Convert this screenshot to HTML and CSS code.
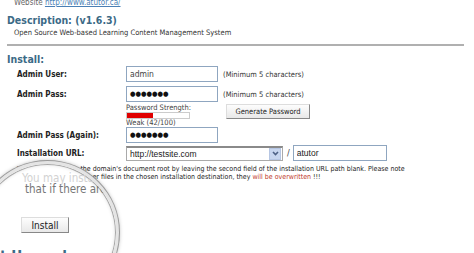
FILE: index.html
```html
<!DOCTYPE html>
<html lang="en">
<head>
    <meta charset="UTF-8">
    <meta name="viewport" content="width=device-width, initial-scale=1.0">
    <title>ATutor Installation</title>
    <link rel="stylesheet" href="styles.css">
</head>
<body>
    <div class="page">
        <div class="site">Website <a href="#">http://www.atutor.ca/</a></div>
        <h2>Description: (v1.6.3)</h2>
        <p class="desc">Open Source Web-based Learning Content Management System</p>
        <hr>
        <h2>Install:</h2>

        <div class="form">
            <div class="row">
                <label>Admin User:</label>
                <div class="field">
                    <input class="box" type="text" value="admin">
                    <span class="hint">(Minimum 5 characters)</span>
                </div>
            </div>
            <div class="row">
                <label>Admin Pass:</label>
                <div class="field">
                    <div class="box pass">●●●●●●●</div>
                    <span class="hint">(Minimum 5 characters)</span>
                </div>
            </div>
            <div class="row strength-row">
                <span></span>
                <div class="field top">
                    <div class="strength">
                        <div>Password Strength:</div>
                        <div class="meter"><div class="fill" style="width: 42%;"></div></div>
                        <div>Weak (42/100)</div>
                    </div>
                    <button class="btn gen">Generate Password</button>
                </div>
            </div>
            <div class="row">
                <label>Admin Pass (Again):</label>
                <div class="field">
                    <div class="box pass">●●●●●●●</div>
                </div>
            </div>
            <div class="row url-row">
                <label>Installation URL:</label>
                <div class="field">
                    <div class="select">
                        <span>http://testsite.com</span>
                        <span class="arrow">
                            <svg width="9" height="9" viewBox="0 0 9 9"><path d="M2 3 L4.5 5.5 L7 3" fill="none" stroke="#4d6185" stroke-width="1.6"/></svg>
                        </span>
                    </div>
                    <span class="slash">/</span>
                    <input class="box path" type="text" value="atutor">
                </div>
            </div>
        </div>

        <p class="note">You may install into the domain's document root by leaving the second field of the installation URL path blank. Please note<br>that if there are any other files in the chosen installation destination, they <span class="warn">will be overwritten</span> !!!</p>
    </div>

    <!-- magnifier over the bottom-left corner -->
    <div class="lens">
        <div class="zoom-line faded">You may install into the</div>
        <div class="zoom-line second">that if there are any</div>
        <button class="btn big">Install</button>
        <div class="zoom-head">t Upgrade:</div>
    </div>
</body>
</html>
```

FILE: styles.css
```css
* { box-sizing: border-box; }
html, body { margin: 0; height: 100%; overflow: hidden; background: #fff; }
body { font-family: "DejaVu Sans Condensed", "DejaVu Sans", Verdana, sans-serif; font-stretch: condensed; color: #222; position: relative; }
.page { padding: 0 10px 0 7px; }
.site { font-size: 8px; line-height: 10px; margin-top: -2px; padding-left: 7px; color: #666; }
.site a { color: #4a7fb5; }
h2 { font-size: 10.5px; line-height: 13px; margin: 6px 0 0; color: #3b6a86; font-weight: bold; }
.desc { font-size: 7.5px; line-height: 9px; margin: 1px 0 0 7px; color: #333; }
hr { border: none; border-top: 2px solid #b0b0b0; margin: 7px 0 0; height: 0; }
hr + h2 { margin-top: 7px; }
.form { padding-left: 10px; }
.row { display: grid; grid-template-columns: 109px auto; align-items: center; height: 16px; margin-bottom: 4px; }
.row label { font-size: 8px; font-weight: bold; color: #222; }
.field { display: flex; align-items: center; gap: 5px; }
.field.top { align-items: flex-start; }
.box { width: 92px; height: 16px; border: 1px solid #8fa6c0; padding: 0 3px; font-family: inherit; font-stretch: condensed; font-size: 8.5px; color: #444; background: #fff; line-height: 14px; outline: none; margin: 0; }
.pass { font-size: 7px; color: #111; }
.hint { font-size: 7.5px; color: #333; }
.strength-row { height: 25px; margin-top: -4px; margin-bottom: 0; }
.strength { width: 95px; font-size: 7.5px; line-height: 8px; color: #444; padding-top: 1px; }
.meter { width: 64px; height: 7px; border: 1px solid #ccc; background: #fff; }
.fill { height: 100%; background: #e00000; }
.btn { font-family: inherit; font-stretch: condensed; font-size: 7.5px; color: #222; background: linear-gradient(#fdfdfd, #e8e8e8); border: 1px solid #ddd; border-right-color: #888; border-bottom-color: #888; padding: 0 5px; height: 14px; margin-top: 1px; }
.gen { width: 84px; height: 15px; }
.url-row { margin-top: -2px; }
.select { width: 157px; height: 15px; border: 1px solid #aaa; border-top: 2px solid #8a8a8a; display: flex; align-items: center; justify-content: space-between; font-family: "Liberation Sans", Arial, sans-serif; font-size: 8.5px; color: #222; padding-left: 3px; }
.arrow { width: 12px; height: 12px; background: #c8d6ef; border: 1px solid #b6c6e3; display: flex; align-items: center; justify-content: center; margin-right: 1px; }
.slash { font-size: 9px; color: #444; margin: 0 -2px 0 -1px; }
.path { width: 94px; font-family: "Liberation Sans", Arial, sans-serif; color: #222; }
.note { font-size: 7px; line-height: 8px; margin: 3px 0 0 10px; color: #222; white-space: nowrap; }
.warn { color: #c0392b; }
.lens { position: absolute; left: -24px; top: 161px; width: 143px; height: 143px; border-radius: 50%; background: #fff; border: 3px solid #e4e4e4; box-shadow: 0 0 0 1px #9a9a9a, 0 0 4px rgba(0,0,0,.35), inset 0 0 0 1px #a8a8a8, inset 0 0 4px rgba(0,0,0,.2); overflow: hidden; padding: 8px 0 0 43px; }
.zoom-line { font-size: 11.5px; line-height: 12px; color: #777; white-space: nowrap; }
.zoom-line.second { margin: -1px 0 0 3px; }
.faded { color: #d2d2d2; }
.btn.big { font-size: 10px; height: 16px; width: 48px; padding: 0; margin: 22px 0 0 -1px; display: block; }
.zoom-head { font-size: 15px; line-height: 17px; font-weight: bold; color: #3b6a86; margin: 16px 0 0 -22px; white-space: nowrap; }
```
